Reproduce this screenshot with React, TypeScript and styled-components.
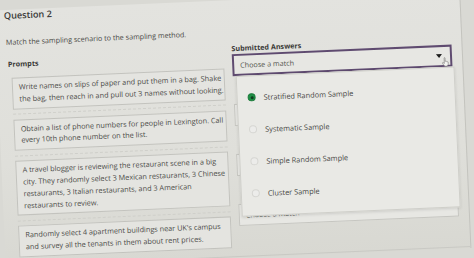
import React from "react";
import styled, { createGlobalStyle } from "styled-components";

const GlobalStyle = createGlobalStyle`
  html, body {
    margin: 0;
    padding: 0;
    background: #d9d9d4;
    overflow: hidden;
  }
  body {
    font-family: "Open Sans", "Liberation Sans", sans-serif;
    color: #4a4a47;
  }
`;

// lines kept as in the original layout
const prompts = [
	[
		"Write names on slips of paper and put them in a bag. Shake",
		"the bag, then reach in and pull out 3 names without looking.",
	],
	[
		"Obtain a list of phone numbers for people in Lexington. Call",
		"every 10th phone number on the list.",
	],
	[
		"A travel blogger is reviewing the restaurant scene in a big",
		"city. They randomly select 3 Mexican restaurants, 3 Chinese",
		"restaurants, 3 Italian restaurants, and 3 American",
		"restaurants to review.",
	],
	[
		"Randomly select 4 apartment buildings near UK's campus",
		"and survey all the tenants in them about rent prices.",
	],
];

const options = [
	"Stratified Random Sample",
	"Systematic Sample",
	"Simple Random Sample",
	"Cluster Sample",
];

const Photo = styled.div`
  width: 474px;
  height: 258px;
  transform: rotate(-2.5deg);
  transform-origin: 237px 129px;
`;

const Panel = styled.div`
  width: 466px;
  height: 258px;
  padding: 0 0 0 9px;
  background: linear-gradient(180deg, #e3e3df 0%, #dfdfda 60%, #d8d8d2 100%);
  border-right: 1px solid #c4c4bf;
  box-sizing: border-box;
  overflow: hidden;
`;

const QuestionTitle = styled.h2`
  margin: 0;
  font-size: 9.2px;
  line-height: 12px;
  font-weight: 600;
  color: #3a3a38;
`;

const Instructions = styled.p`
  margin: 14px 0 0 1px;
  font-size: 7.2px;
  line-height: 12px;
  color: #4a4a47;
`;

const Columns = styled.div`
  display: flex;
  gap: 8px;
  margin-top: 4px;
`;

const PromptColumn = styled.div`
  width: 218px;
  display: flex;
  flex-direction: column;
  padding-top: 6px;
`;

const AnswerColumn = styled.div`
  width: 220px;
  display: flex;
  flex-direction: column;
`;

const ColumnHeader = styled.div<{ $indent?: number }>`
  font-size: 7.2px;
  line-height: 12px;
  font-weight: 700;
  color: #3a3a38;
  padding-left: ${(p) => p.$indent ?? 0}px;
`;

const PromptList = styled.div`
  display: flex;
  flex-direction: column;
  margin-top: 8px;
  padding-left: 5px;
`;

const PromptRow = styled.div`
  padding: 4.5px 0;
  border-bottom: 1px dashed #cfcfca;
  &:first-child {
    padding-top: 0;
  }
  &:last-child {
    border-bottom: none;
  }
`;

const PromptBox = styled.div`
  border: 1px solid #c3c3be;
  background: #e4e4e0;
  padding: 3px 4px 3px 6px;
  font-size: 7.3px;
  line-height: 11.8px;
  color: #4a4a47;
  overflow: hidden;
`;

const PromptLine = styled.span`
  display: block;
  white-space: nowrap;
`;

const AnswerList = styled.div`
  display: flex;
  flex-direction: column;
  gap: 28px;
`;

const SelectWrap = styled.div`
  position: relative;
`;

const Select = styled.div<{ $active?: boolean }>`
  height: 22px;
  box-sizing: border-box;
  display: flex;
  align-items: center;
  justify-content: space-between;
  padding: 0 8px 0 6px;
  background: #e7e7e3;
  border: ${(p) => (p.$active ? "2px solid #5f4b70" : "1px solid #c6c6c1")};
  font-size: 7.2px;
  color: #55554f;
`;

const Caret = styled.span`
  width: 0;
  height: 0;
  border-left: 3px solid transparent;
  border-right: 3px solid transparent;
  border-top: 4px solid #1d1d1d;
`;

const Menu = styled.ul`
  position: absolute;
  top: 100%;
  left: 3px;
  right: -2px;
  z-index: 2;
  margin: 0;
  padding: 5px 0 6px;
  list-style: none;
  background: #e9e9e5;
  border: 1px solid #cfcfca;
  box-shadow: 0 1px 3px rgba(0, 0, 0, 0.12);
`;

const Option = styled.li`
  height: 32px;
  display: flex;
  align-items: center;
  gap: 8px;
  padding-left: 10px;
  font-size: 7.4px;
  color: #4a4a47;
`;

const Radio = styled.span<{ $checked?: boolean }>`
  width: 8px;
  height: 8px;
  border-radius: 50%;
  box-sizing: border-box;
  background: ${(p) => (p.$checked ? "#1f8f45" : "#ececea")};
  border: 1px solid ${(p) => (p.$checked ? "#1a7a3a" : "#d6d6d2")};
  display: flex;
  align-items: center;
  justify-content: center;
  &::after {
    content: "";
    width: 3px;
    height: 3px;
    border-radius: 50%;
    background: ${(p) => (p.$checked ? "#0f3d1f" : "transparent")};
  }
`;

const Pointer = styled.svg`
  position: absolute;
  right: 2px;
  top: 12px;
  z-index: 3;
`;

const BottomRule = styled.div`
  margin: 4px 0 0 0;
  border-top: 1px solid #c9c9c4;
`;

const App: React.FC = () => {
	return (
		<>
			<GlobalStyle />
			<Photo>
				<Panel>
					<QuestionTitle>Question 2</QuestionTitle>
					<Instructions>
						Match the sampling scenario to the sampling method.
					</Instructions>
					<Columns>
						<PromptColumn>
							<ColumnHeader $indent={2}>Prompts</ColumnHeader>
							<PromptList>
								{prompts.map((lines) => (
									<PromptRow key={lines[0]}>
										<PromptBox>
											{lines.map((l) => (
												<PromptLine key={l}>{l}</PromptLine>
											))}
										</PromptBox>
									</PromptRow>
								))}
							</PromptList>
						</PromptColumn>
						<AnswerColumn>
							<ColumnHeader>Submitted Answers</ColumnHeader>
							<AnswerList>
								{prompts.map((lines, i) => (
									<SelectWrap key={lines[0]}>
										<Select $active={i === 0}>
											Choose a match
											<Caret />
										</Select>
										{i === 0 && (
											<>
												<Pointer width="9" height="10" viewBox="0 0 9 10">
													<path
														d="M3 1.2c0-.6.9-.6.9 0V4.5l.3-.1c.4-.2.8 0 .9.3.3-.2.8-.1.9.3.4-.2.9 0 .9.5V7c0 1.4-1 2.4-2.4 2.4H4.2C3.3 9.4 2.7 8.9 2.3 8.2L1.2 6.3c-.3-.5.3-1 .8-.6L3 6.6Z"
														fill="#f4f4f2"
														stroke="#7a7a76"
														strokeWidth="0.6"
													/>
												</Pointer>
												<Menu>
													{options.map((o, j) => (
														<Option key={o}>
															<Radio $checked={j === 0} />
															{o}
														</Option>
													))}
												</Menu>
											</>
										)}
									</SelectWrap>
								))}
							</AnswerList>
						</AnswerColumn>
					</Columns>
					<BottomRule />
				</Panel>
			</Photo>
		</>
	);
};

export default App;
